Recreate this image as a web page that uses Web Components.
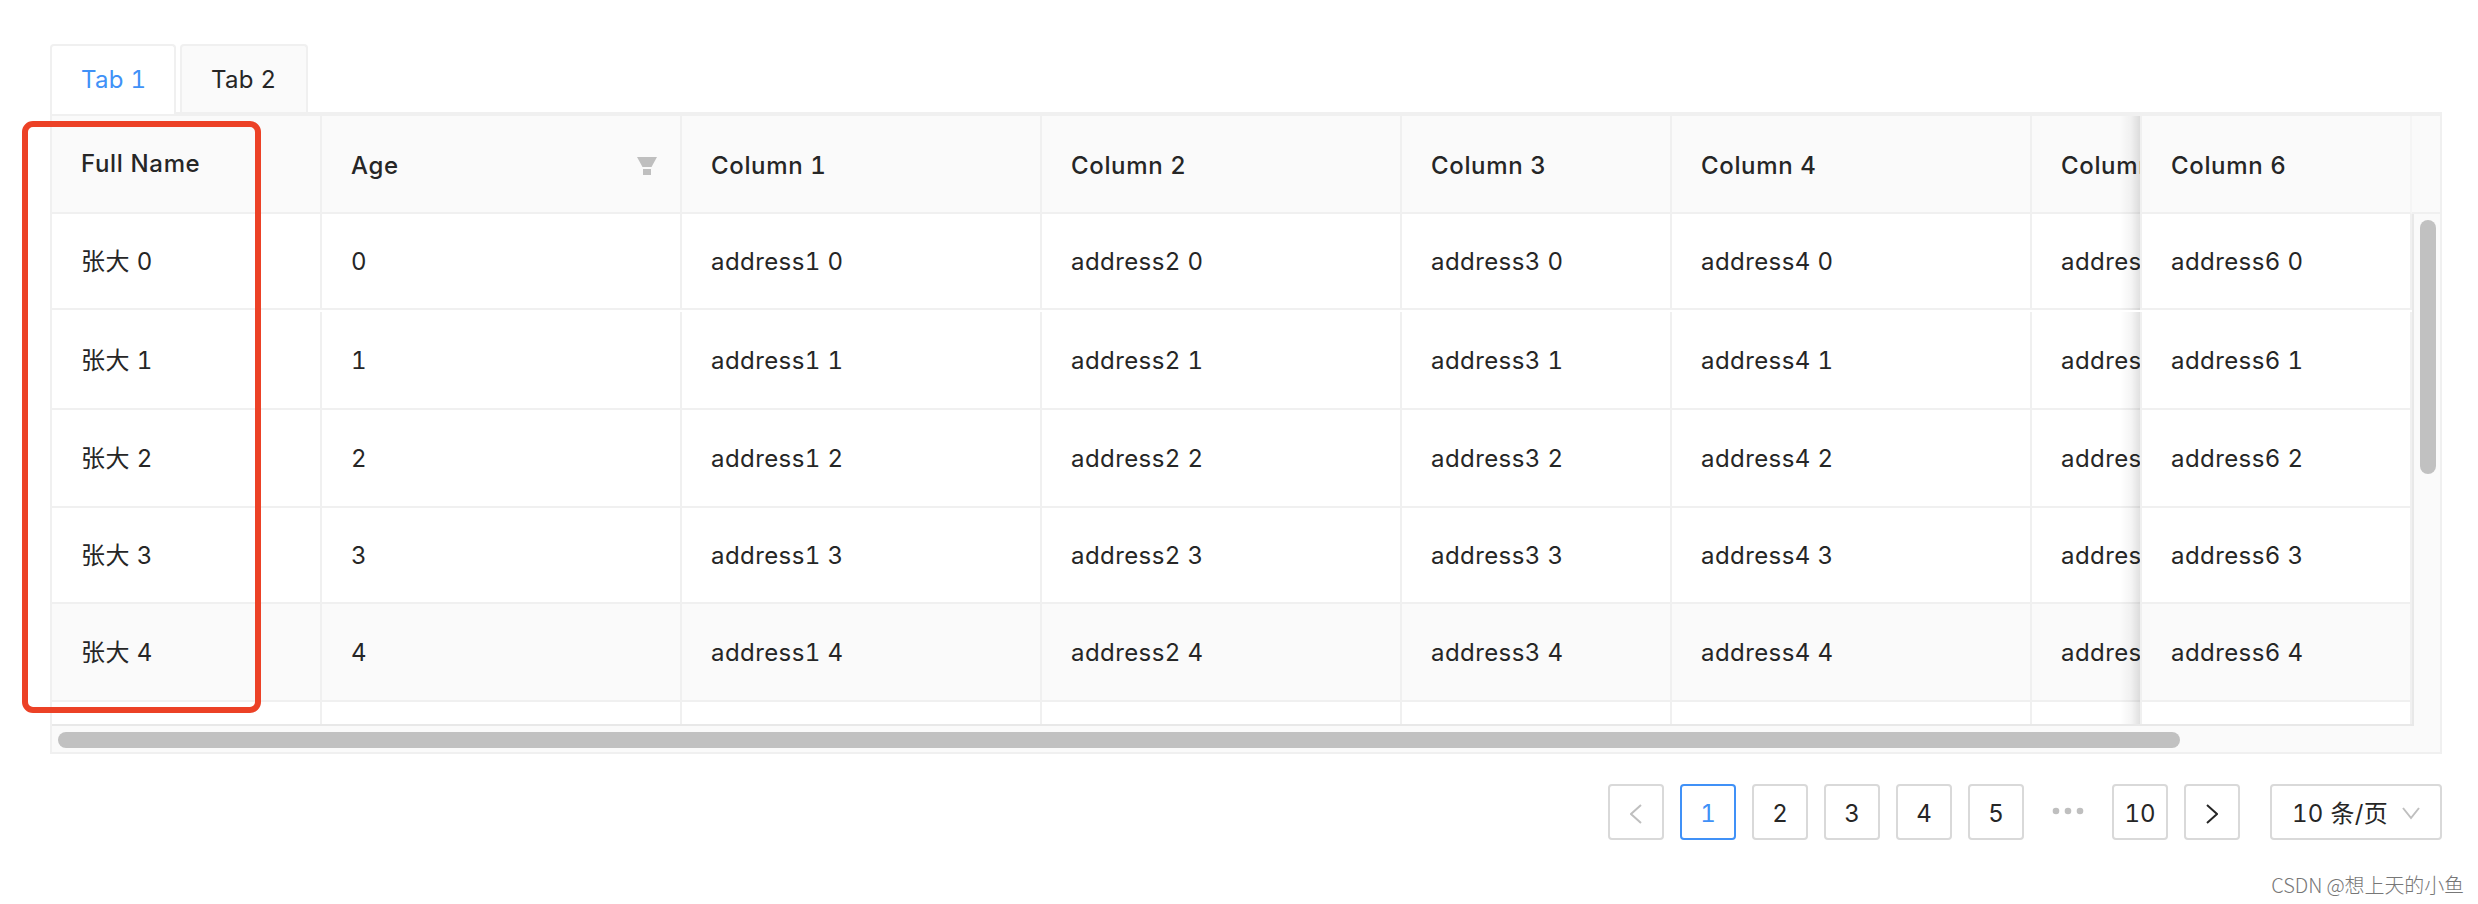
<!DOCTYPE html>
<html lang="zh">
<head>
<meta charset="utf-8">
<title>Table</title>
<style>
body {
  margin: 0;
  background: #fff;
  color: #262626;
  font: 24px/36px Inter, "Noto Sans CJK SC", sans-serif;
  font-variant-numeric: tabular-nums;
}
</style>
</head>
<body>
<demo-page></demo-page>

<script>
const define = (name, html, setup) => {
  const template = document.createElement("template");
  template.innerHTML = html;
  customElements.define(
    name,
    class extends HTMLElement {
      connectedCallback() {
        const root = this.attachShadow({ mode: "open" });
        root.appendChild(template.content.cloneNode(true));
        if (setup) setup(this, root);
      }
    }
  );
};

define("card-tab", `
<style>
:host {
  box-sizing: border-box;
  display: block;
  height: 68px;
  width: 128px;
  padding: 16px 0 0 29px;
  border: 2px solid #f0f0f0;
  border-bottom: 0;
  border-radius: 4px 4px 0 0;
  background: #fafafa;
  letter-spacing: 0.3px;
  white-space: nowrap;
}
:host([active]) {
  width: 126px;
  height: 70px;
  background: #fff;
  color: #4091f7;
}
</style>
<slot></slot>
`);

define("card-tabs", `
<style>
:host {
  box-sizing: border-box;
  display: flex;
  align-items: flex-start;
  gap: 4px;
  height: 70px;
  background: linear-gradient(#f0f0f0, #f0f0f0) bottom / 100% 2px no-repeat;
}
</style>
<slot></slot>
`);

define("table-cell", `
<style>
:host {
  box-sizing: border-box;
  display: flex;
  align-items: center;
  justify-content: space-between;
  min-width: 0;
  padding: 2px 23px 0 29px;
  border-right: 2px solid #f0f0f0;
  border-bottom: 2px solid #f0f0f0;
  background: inherit;
  letter-spacing: 0.42px;
  white-space: nowrap;
  overflow: hidden;
}
:host([head]) {
  padding-top: 3px;
  font-weight: 500;
  letter-spacing: 0.65px;
}
:host([raised]) {
  align-items: flex-start;
  padding-top: 30px;
}
:host([cut]) {
  border-right: 0;
  padding-right: 0;
}
:host([fixed]) {
  position: relative;
  overflow: visible;
  border-left: 2px solid #f0f0f0;
  padding-left: 29px;
}
:host([fixed][head]) {
  border-right-color: #f5f5f5;
}
:host([fixed])::before {
  content: "";
  position: absolute;
  top: 0;
  bottom: -2px;
  left: -22px;
  width: 20px;
  background: linear-gradient(to left, rgba(0, 0, 0, 0.12), rgba(0, 0, 0, 0.04) 45%, transparent);
}
</style>
<slot></slot>
`);

define("filter-icon", `
<style>
:host { display: block; height: 18px; width: 20px; }
svg { display: block; fill: #bfbfbf; }
</style>
<svg width="20" height="18"><path d="M0 0h20l-5.5 10h-9zM6 12h8v6H6z"/></svg>
`);

const columns = "270px 360px 360px 360px 270px 360px 108px 272px";
const rowHeights = [96, 100, 98, 96, 98, 24];

define("data-table", `
<style>
:host {
  box-sizing: border-box;
  display: block;
  width: 2392px;
  height: 640px;
  border: 2px solid #f0f0f0;
  background: #fafafa;
}
.row {
  display: grid;
  grid-template-columns: ${columns};
  background: #fff;
}
.head {
  height: 98px;
  background: #fafafa;
  box-shadow: inset 0 -2px #f0f0f0;
}
.gap {
  box-sizing: border-box;
  border-top: 2px solid #fff;
}
.hover {
  background: #fafafa;
}
.view {
  display: flex;
}
.body {
  box-sizing: border-box;
  width: 2362px;
  height: 512px;
  border-right: 2px solid #e8e8e8;
  border-bottom: 2px solid #e8e8e8;
  overflow: hidden;
}
.vthumb {
  width: 16px;
  height: 254px;
  margin: 6px 0 0 6px;
  border-radius: 8px;
  background: #c1c1c1;
}
.hthumb {
  width: 2122px;
  height: 16px;
  margin: 6px 0 0 6px;
  border-radius: 8px;
  background: #c1c1c1;
}
</style>
<div class="row head"></div>
<div class="view">
  <div class="body"></div>
  <div class="vthumb"></div>
</div>
<div class="hthumb"></div>
`, (host, root) => {
  const fill = (row, texts, head) =>
    texts.forEach((text, i) => {
      const cell = document.createElement("table-cell");
      cell.textContent = text;
      cell.toggleAttribute("head", head);
      cell.toggleAttribute("raised", head && i === 0);
      cell.toggleAttribute("cut", i === 6);
      cell.toggleAttribute("fixed", i === 7);
      if (head && i === 1) cell.append(document.createElement("filter-icon"));
      row.append(cell);
    });

  const numbers = [1, 2, 3, 4, 5, 6];
  fill(root.querySelector(".head"), ["Full Name", "Age", ...numbers.map((n) => `Column ${n}`)], true);

  const body = root.querySelector(".body");
  rowHeights.forEach((height, i) => {
    const row = document.createElement("div");
    row.className = "row";
    row.style.height = `${height}px`;
    row.classList.toggle("gap", i === 1);
    row.classList.toggle("hover", i === 4);
    // the sixth row only peeks out above the scrollbar
    const texts = i === 5 ? Array(8).fill("") : [`张大 ${i}`, i, ...numbers.map((n) => `address${n} ${i}`)];
    fill(row, texts, false);
    body.append(row);
  });
});

define("page-item", `
<style>
:host {
  box-sizing: border-box;
  display: flex;
  align-items: center;
  justify-content: center;
  width: 56px;
  height: 56px;
  padding-top: 3px;
  border: 2px solid #d9d9d9;
  border-radius: 4px;
  background: #fff;
}
:host([active]) { border-color: #4091f7; color: #4091f7; }
:host([disabled]) { color: #bfbfbf; }
:host([dots]) { padding-top: 1px; border-color: transparent; color: #bfbfbf; }
:host([size]) { width: 172px; gap: 14px; margin-left: 14px; letter-spacing: 0.3px; }
::slotted(svg) {
  fill: none;
  stroke: currentColor;
  stroke-width: 2;
}
</style>
<slot></slot>
`);

define("page-nav", `
<style>
:host {
  display: flex;
  justify-content: flex-end;
  gap: 16px;
  padding-top: 30px;
}
.dots { fill: currentColor; stroke: none; }
.down { color: #bfbfbf; }
</style>
<page-item disabled><svg width="12" height="20"><path d="M11 1L1 10l10 9"/></svg></page-item>
<page-item active>1</page-item>
<page-item>2</page-item>
<page-item>3</page-item>
<page-item>4</page-item>
<page-item>5</page-item>
<page-item dots><svg class="dots" width="32" height="12"><circle cx="4" cy="4" r="3.3"/><circle cx="16" cy="4" r="3.3"/><circle cx="28" cy="4" r="3.3"/></svg></page-item>
<page-item>10</page-item>
<page-item><svg width="12" height="20"><path d="M1 1l10 9-10 9"/></svg></page-item>
<page-item size><span>10 条/页</span><svg class="down" width="18" height="14"><path d="M1 1l8 10 8-10"/></svg></page-item>
`);

define("demo-page", `
<style>
:host {
  box-sizing: border-box;
  display: block;
  position: relative;
  width: 2478px;
  height: 904px;
  padding: 44px 36px 0 50px;
  overflow: hidden;
}
/* red frame drawn over the first column */
.mark {
  position: absolute;
  box-sizing: border-box;
  left: 22px;
  top: 121px;
  width: 239px;
  height: 592px;
  border: 6px solid #ec4126;
  border-radius: 11px;
}
.credit {
  margin: 27px -22px 0 0;
  font: 300 20px/36px "Noto Sans CJK SC", sans-serif;
  letter-spacing: -0.1px;
  text-align: right;
  color: #777;
}
</style>
<card-tabs>
  <card-tab active>Tab 1</card-tab>
  <card-tab>Tab 2</card-tab>
</card-tabs>
<data-table></data-table>
<page-nav></page-nav>
<div class="credit">CSDN @想上天的小鱼</div>
<div class="mark"></div>
`);
</script>
</body>
</html>
